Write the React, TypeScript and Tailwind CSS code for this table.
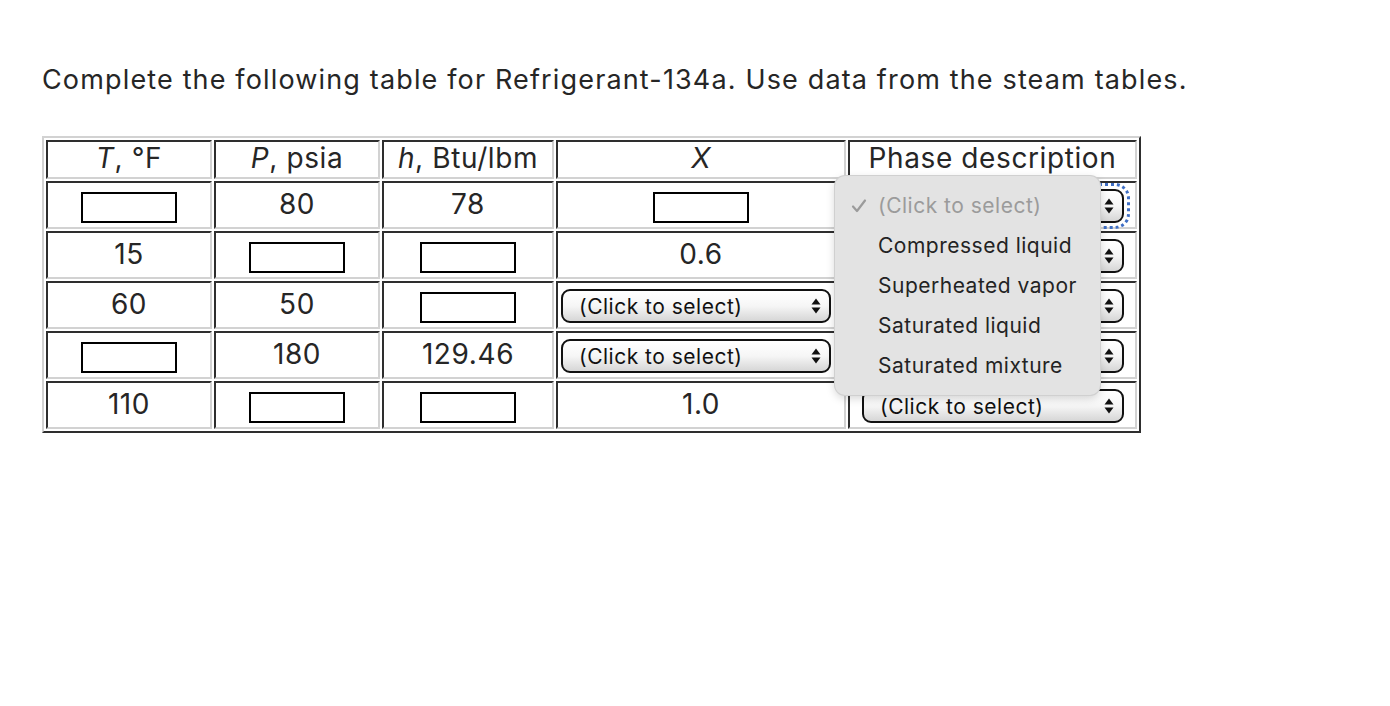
import React from "react";

const cellBorder =
  "border-2 border-t-[#2e2e2e] border-l-[#2e2e2e] border-r-[#d2d2d2] border-b-[#d2d2d2] bg-white";

function Cell({ children, className = "" }: { children?: React.ReactNode; className?: string }) {
  return (
    <div className={`${cellBorder} flex items-center justify-center pb-[3px] leading-none ${className}`}>
      {children}
    </div>
  );
}

function Blank() {
  return <div className="mt-[8px] h-[31px] w-[96px] border-2 border-black bg-white" />;
}

function Arrows() {
  return (
    <svg width="10" height="16" viewBox="0 0 10 16" className="shrink-0">
      <path d="M5 0.5 L9.5 6.5 L0.5 6.5 Z" fill="#111" />
      <path d="M5 15.5 L9.5 9.5 L0.5 9.5 Z" fill="#111" />
    </svg>
  );
}

function Select({ width, focused = false }: { width: string; focused?: boolean }) {
  return (
    <div
      className={`${width} flex h-[34px] items-center justify-between rounded-[9px] border-2 border-[#111] bg-linear-to-b from-white via-[#f6f6f6] to-[#d6d6d6] pl-[16px] pr-[8px] text-[21px] leading-none tracking-[0.5px] text-[#111] ${
        focused ? "outline-[3px] outline-offset-[3px] outline-dotted outline-[#3f6fc5]" : ""
      }`}
    >
      <span>(Click to select)</span>
      <Arrows />
    </div>
  );
}

function SelectCell({ col }: { col: 4 | 5 }) {
  return (
    <div className={`${cellBorder} flex items-center ${col === 4 ? "pl-[3px] pt-[2px]" : "pl-[12px] pt-[2px]"}`}>
      <Select width={col === 4 ? "w-[270px]" : "w-[262px]"} />
    </div>
  );
}

const menuItems = ["Compressed liquid", "Superheated vapor", "Saturated liquid", "Saturated mixture"];

export default function App() {
  return (
    <div className="relative min-h-[706px] w-[1390px] bg-white px-[42px] pt-[64px] font-['Inter',sans-serif] text-[#262626]">
      <h1 className="text-[27px] leading-[32px] tracking-[1.15px]">
        Complete the following table for Refrigerant-134a. Use data from the steam tables.
      </h1>

      <div className="mt-[40px] inline-block border-2 border-t-[#d2d2d2] border-l-[#d2d2d2] border-r-[#2e2e2e] border-b-[#2e2e2e] p-[2px]">
        <div className="grid grid-cols-[166px_166px_172px_290px_289px] grid-rows-[39px_48px_48px_48px_48px_48px] gap-[2px] text-[28px] tracking-[0.6px]">
          <Cell>
            <span>
              <i>T</i>, °F
            </span>
          </Cell>
          <Cell>
            <span>
              <i>P</i>, psia
            </span>
          </Cell>
          <Cell>
            <span>
              <i>h</i>, Btu/lbm
            </span>
          </Cell>
          <Cell>
            <i>X</i>
          </Cell>
          <Cell>Phase description</Cell>

          <Cell>
            <Blank />
          </Cell>
          <Cell>80</Cell>
          <Cell>78</Cell>
          <Cell>
            <Blank />
          </Cell>
          <div className={`${cellBorder} flex items-center pl-[12px] pt-[2px]`}>
            <Select width="w-[262px]" focused />
          </div>

          <Cell>15</Cell>
          <Cell>
            <Blank />
          </Cell>
          <Cell>
            <Blank />
          </Cell>
          <Cell>0.6</Cell>
          <SelectCell col={5} />

          <Cell>60</Cell>
          <Cell>50</Cell>
          <Cell>
            <Blank />
          </Cell>
          <SelectCell col={4} />
          <SelectCell col={5} />

          <Cell>
            <Blank />
          </Cell>
          <Cell>180</Cell>
          <Cell>129.46</Cell>
          <SelectCell col={4} />
          <SelectCell col={5} />

          <Cell>110</Cell>
          <Cell>
            <Blank />
          </Cell>
          <Cell>
            <Blank />
          </Cell>
          <Cell>1.0</Cell>
          <SelectCell col={5} />
        </div>
      </div>

      {/* open dropdown for row 1 phase select */}
      <div className="absolute left-[835px] top-[176px] w-[265px] rounded-[10px] bg-[#e3e3e3] pb-[9px] pt-[10px] text-[21px] tracking-[0.5px] shadow-[0_3px_10px_rgba(0,0,0,0.18)] ring-1 ring-[#d0d0d0]">
        <div className="flex h-[40px] items-center text-[#9b9b9b]">
          <svg width="43" height="16" viewBox="0 0 43 16" className="shrink-0">
            <path d="M18 8.5 L22 13 L30 2.5" fill="none" stroke="#9b9b9b" strokeWidth="2.2" strokeLinecap="round" strokeLinejoin="round" />
          </svg>
          <span>(Click to select)</span>
        </div>
        {menuItems.map((item) => (
          <div key={item} className="flex h-[40px] items-center pl-[43px] text-[#232323]">
            {item}
          </div>
        ))}
      </div>
    </div>
  );
}
